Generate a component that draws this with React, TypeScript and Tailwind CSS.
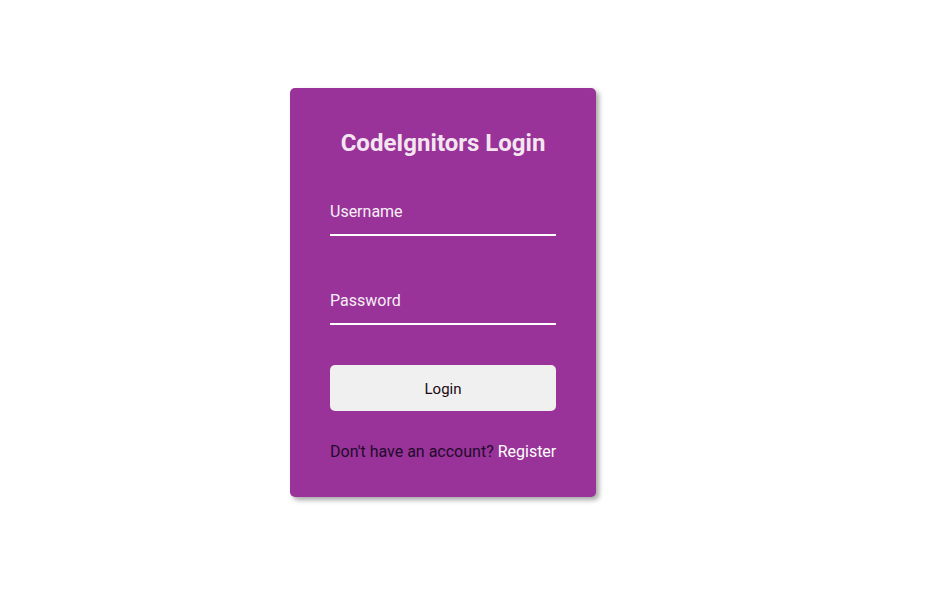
export default function App() {
  return (
    <div
      className="min-h-[591px] w-full bg-white"
      style={{ fontFamily: "Roboto, 'Liberation Sans', sans-serif" }}
    >
      <div className="flex justify-start pl-[290px] pt-[88px]">
        {/* Login card */}
        <div className="w-[306px] rounded-[5px] bg-[#993399] px-[40px] pt-[41px] pb-[36px] shadow-[3px_3px_5px_rgba(0,0,0,0.35)]">
          <h1 className="text-center text-[24px] leading-[28px] font-bold text-[#f4e6f0]">
            CodeIgnitors Login
          </h1>

          <form className="mt-[45px] flex flex-col" onSubmit={(e) => e.preventDefault()}>
            <input
              type="text"
              placeholder="Username"
              className="h-[34px] w-full border-b-2 border-white bg-transparent pb-[13px] text-[16px] leading-[19px] text-white outline-none placeholder:text-[#f7f0f6]"
            />
            <input
              type="password"
              placeholder="Password"
              className="mt-[55px] h-[34px] w-full border-b-2 border-white bg-transparent pb-[13px] text-[16px] leading-[19px] text-white outline-none placeholder:text-[#f7f0f6]"
            />
            <button
              type="submit"
              className="mt-[40px] h-[46px] w-full rounded-[5px] bg-[#f0f0f0] pt-[2px] text-[15px] text-[#1a0a14]"
            >
              Login
            </button>
          </form>

          <p className="mt-[31px] whitespace-nowrap text-[16px] leading-[19px] text-[#1f0b2c]">
            Don't have an account?{" "}
            <a href="#" className="text-white">
              Register
            </a>
          </p>
        </div>
      </div>
    </div>
  );
}
